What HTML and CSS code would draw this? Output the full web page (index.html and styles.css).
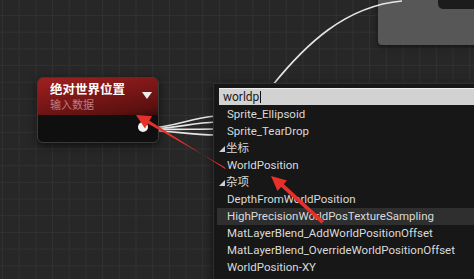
FILE: index.html
```html
<!DOCTYPE html>
<html lang="en">
<head>
  <meta charset="UTF-8" />
  <title>Material Graph</title>
  <link rel="stylesheet" href="styles.css">
</head>
<body>
  <div class="graph">

    <div class="comment-box">
      <div class="comment-tab"></div>
    </div>

    <svg class="wires" width="474" height="279">
      <path d="M272 86 C 305 45, 345 6, 402 1" />
      <path d="M146 128 C 175 128, 188 118, 216 116" />
      <path d="M146 129 C 175 129, 190 123, 216 122" />
      <path d="M146 129 C 175 130, 190 129, 216 129" />
      <path d="M146 130 C 175 131, 190 135, 216 135" />
    </svg>

    <div class="node">
      <div class="node-header">
        <div class="node-title">绝对世界位置</div>
        <div class="node-sub">输入数据</div>
        <span class="node-arrow"></span>
      </div>
      <div class="node-body">
        <span class="pin"></span>
      </div>
    </div>

    <div class="popup">
      <div class="search">worldp<span class="caret"></span></div>
      <ul class="results">
        <li class="item">Sprite_Ellipsoid</li>
        <li class="item">Sprite_TearDrop</li>
        <li class="category"><span class="tri"></span>坐标</li>
        <li class="item">WorldPosition</li>
        <li class="category"><span class="tri"></span>杂项</li>
        <li class="item">DepthFromWorldPosition</li>
        <li class="item hover">HighPrecisionWorldPosTextureSampling</li>
        <li class="item">MatLayerBlend_AddWorldPositionOffset</li>
        <li class="item">MatLayerBlend_OverrideWorldPositionOffset</li>
        <li class="item">WorldPosition-XY</li>
      </ul>
    </div>

    <!-- red annotation arrows -->
    <svg class="arrows" width="474" height="279">
      <polygon points="226,169.5 147.5,119.5 146,122.5 224.5,167" />
      <polygon points="136,115 152,116 145,128.5" />
      <polygon points="324,221 281.5,182 279,185 321.5,223.5" />
      <polygon points="271,176 287,180.5 277.5,191" />
    </svg>

  </div>
</body>
</html>
```

FILE: styles.css
```css
body {
  margin: 0;
  padding: 0;
  font-family: Roboto, "Noto Sans CJK SC", sans-serif;
}

.graph {
  position: relative;
  width: 474px;
  height: 279px;
  overflow: hidden;
  background-color: #272727;
  background-image:
    linear-gradient(#313131 1px, transparent 1px),
    linear-gradient(90deg, #313131 1px, transparent 1px);
  background-size: 16.7px 16.7px;
  background-position: 2px 15px;
}

.comment-box {
  position: absolute;
  left: 378px;
  top: -6px;
  width: 110px;
  height: 51px;
  background: #575757;
  border-radius: 4px;
  box-shadow: 0 2px 6px rgba(0, 0, 0, 0.5);
}

.comment-tab {
  position: absolute;
  left: 60px;
  top: 0;
  width: 60px;
  height: 15px;
  background: #1c1c1c;
  border-radius: 5px;
}

.wires,
.arrows {
  position: absolute;
  left: 0;
  top: 0;
}

.wires path {
  fill: none;
  stroke: #e6e6e6;
  stroke-width: 1.6;
}

.arrows polygon {
  fill: #e8302a;
}

.node {
  position: absolute;
  left: 37px;
  top: 77px;
  width: 120px;
  height: 64px;
  border-radius: 6px;
  border: 1px solid #3a3a3a;
  overflow: hidden;
  box-shadow: 0 3px 8px rgba(0, 0, 0, 0.6);
}

.node-header {
  position: relative;
  height: 37px;
  padding: 3px 0 0 12px;
  box-sizing: border-box;
  background: linear-gradient(170deg, #a02020 0%, #801818 40%, #5c1010 85%, #3a0c0c 100%);
}

.node-title {
  color: #fff;
  font-weight: bold;
  font-size: 12.5px;
  line-height: 17px;
}

.node-sub {
  color: #c47c7c;
  font-size: 11px;
  line-height: 15px;
}

.node-arrow {
  position: absolute;
  right: 6px;
  top: 14px;
  border-left: 5.5px solid transparent;
  border-right: 5.5px solid transparent;
  border-top: 7px solid #eee;
}

.node-body {
  position: relative;
  height: 27px;
  background: #0f0f0f;
}

.pin {
  position: absolute;
  left: 100px;
  top: 7px;
  width: 10px;
  height: 10px;
  border-radius: 50%;
  background: #f2f2f2;
}

.popup {
  position: absolute;
  left: 213px;
  top: 83px;
  width: 270px;
  height: 210px;
  background: #171717;
  border: 1px solid #2e2e2e;
  box-shadow: 0 2px 8px rgba(0, 0, 0, 0.6);
}

.search {
  margin: 4px 0 0 5px;
  height: 16px;
  padding-left: 4px;
  background: #d2d2d2;
  border-top: 1px solid #eee;
  color: #1a1a1a;
  font-size: 12px;
  line-height: 16px;
}

.caret {
  display: inline-block;
  width: 1px;
  height: 12px;
  margin-left: 1px;
  vertical-align: -2px;
  background: #111;
}

.results {
  list-style: none;
  margin: 1px 0 0 0;
  padding: 0;
}

.results li {
  height: 17px;
  line-height: 17px;
  font-size: 11.5px;
  color: #dadada;
  white-space: nowrap;
}

.item {
  padding-left: 13px;
}

.item.hover {
  background: #2f2f2f;
  margin-left: 3px;
  padding-left: 10px;
}

.category {
  display: flex;
  align-items: center;
  padding-left: 5px;
  font-size: 12px;
}

.tri {
  width: 0;
  height: 0;
  margin-right: 1px;
  border-left: 6px solid transparent;
  border-bottom: 6px solid #cfcfcf;
}
```
